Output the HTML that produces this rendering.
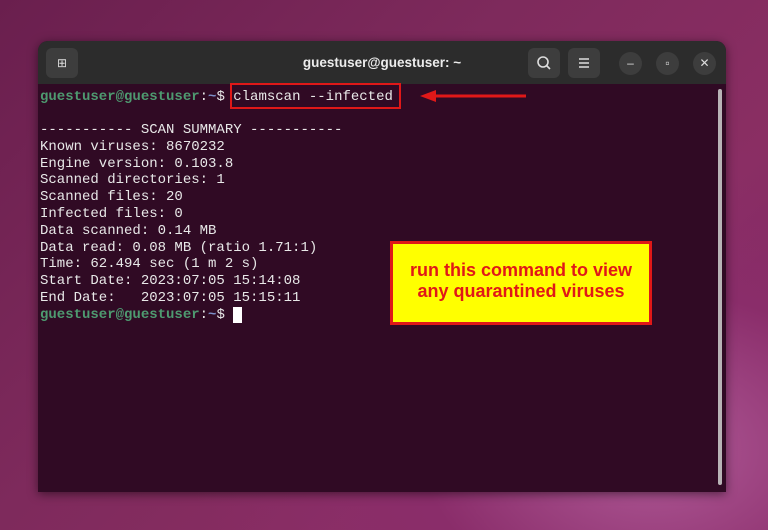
<!DOCTYPE html>
<html><head><style>
*{margin:0;padding:0;box-sizing:border-box}
body{width:768px;height:530px;overflow:hidden;position:relative;
background:radial-gradient(ellipse at 85% 85%,#b05a98 0%,#8a2d6a 25%,transparent 50%),linear-gradient(135deg,#6a1f4e 0%,#7e2a5c 40%,#8a2e63 70%,#7a2558 100%);font-family:"Liberation Sans",sans-serif}
.win{position:absolute;left:38px;top:41px;width:688px;height:451px;background:#300a24;border-radius:10px 10px 0 0;overflow:hidden;box-shadow:0 2px 10px rgba(0,0,0,.5)}
.tb{height:43px;background:#2c2c2c;position:relative}
.title{position:absolute;left:0;right:0;top:14px;text-align:center;color:#ececec;font-weight:bold;font-size:13.5px}
.btn{position:absolute;top:7px;width:32px;height:30px;background:#3d3d3d;border-radius:6px;color:#ddd;text-align:center;line-height:30px;font-size:14px}
.circ{position:absolute;top:11px;width:23px;height:23px;border-radius:50%;background:#3d3d3d;color:#ddd;text-align:center;line-height:23px;font-size:12px}
.term{position:absolute;left:2px;top:47.5px;font-family:"Liberation Mono",monospace;font-size:14px;line-height:16.8px;color:#e8e8e8;white-space:pre}
.g{color:#4e9a70;font-weight:bold}.b{color:#7d8fc8;font-weight:bold}
.sb{position:absolute;right:4px;top:48px;width:4px;height:396px;background:#b8b3b6;border-radius:2px}
.box{position:absolute;left:390px;top:241px;width:262px;height:84px;background:#ffff00;border:3px solid #e01818;color:#e01818;font-weight:bold;font-size:18px;text-align:center;padding-top:16px;line-height:21px}
.cmd{position:absolute;left:230px;top:83px;width:171px;height:26px;border:2.5px solid #e01818}
</style></head><body>
<div class="win">
 <div class="tb">
  <div class="btn" style="left:8px;font-size:12px">⊞</div>
  <div class="title">guestuser@guestuser: ~</div>
  <div class="btn" style="left:490px"><svg width="16" height="16" viewBox="0 0 16 16" style="margin-top:7px"><circle cx="7" cy="7" r="5" stroke="#ddd" stroke-width="1.6" fill="none"/><path d="M10.5 10.5L14 14" stroke="#ddd" stroke-width="1.6"/></svg></div>
  <div class="btn" style="left:530px"><svg width="14" height="14" viewBox="0 0 14 14" style="margin-top:8px"><path d="M2 3h10M2 7h10M2 11h10" stroke="#ddd" stroke-width="1.4"/></svg></div>
  <div class="circ" style="left:581px">–</div>
  <div class="circ" style="left:618px">▫</div>
  <div class="circ" style="left:655px">✕</div>
 </div>
 <div class="term"><span class="g">guestuser@guestuser</span>:<span class="b">~</span>$ clamscan --infected

----------- SCAN SUMMARY -----------
Known viruses: 8670232
Engine version: 0.103.8
Scanned directories: 1
Scanned files: 20
Infected files: 0
Data scanned: 0.14 MB
Data read: 0.08 MB (ratio 1.71:1)
Time: 62.494 sec (1 m 2 s)
Start Date: 2023:07:05 15:14:08
End Date:   2023:07:05 15:15:11
<span class="g">guestuser@guestuser</span>:<span class="b">~</span>$ <span style="background:#fff"> </span></div>
 <div class="sb"></div>
</div>
<div class="cmd"></div>
<svg style="position:absolute;left:418px;top:88px" width="112" height="16"><path d="M14 8H108" stroke="#e01818" stroke-width="3"/><path d="M2 8L18 2V14Z" fill="#e01818"/></svg>
<div class="box">run this command to view<br>any quarantined viruses</div>
</body></html>
